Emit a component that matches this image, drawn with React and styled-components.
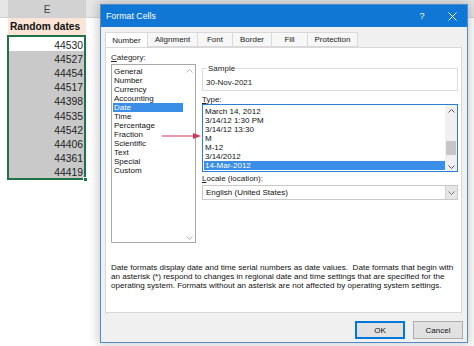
import React from "react";
import styled, { createGlobalStyle } from "styled-components";

const Global = createGlobalStyle`
  html, body { margin: 0; padding: 0; background: #fff; }
  * { box-sizing: border-box; }
`;

const UI = `"Liberation Sans", Arial, sans-serif`;
const XL = `"Liberation Sans", Arial, sans-serif`;

const Page = styled.div`
  position: relative;
  width: 474px;
  height: 346px;
  overflow: hidden;
  background: #fff;
  font-family: ${UI};
`;

/* ---------- spreadsheet ---------- */
const HeaderRow = styled.div`
  display: flex;
  height: 18px;
  background: #e6e6e6;
  border-bottom: 1px solid #d0d0d0;
`;
const Corner = styled.div`
  width: 8px;
`;
const ColHead = styled.div`
  width: 78px;
  background: #d2d2d2;
  display: flex;
  align-items: flex-end;
  justify-content: center;
  padding-bottom: 2px;
  font-family: ${XL};
  font-size: 10px;
  color: #444;
`;
const Column = styled.div`
  margin-left: 7px;
  width: 79px;
  display: flex;
  flex-direction: column;
`;
const TitleCell = styled.div`
  margin-left: 1px;
  height: 17px;
  background: #fce4d6;
  font-family: ${XL};
  font-weight: bold;
  font-size: 10.2px;
  line-height: 18px;
  padding-left: 2px;
  color: #111;
`;
const Selection = styled.div`
  position: relative;
  height: 145px;
  border: 2px solid #217346;
  display: flex;
  flex-direction: column;
`;
const DataCell = styled.div`
  height: 14.1px;
  background: ${(p) => (p.$active ? "#fff" : "#c9c9c9")};
  font-family: ${XL};
  font-size: 10.3px;
  line-height: 11px;
  color: #222;
  display: flex;
  align-items: flex-end;
  justify-content: flex-end;
  padding-right: 1px;
  padding-bottom: 0px;
`;
const FillHandle = styled.div`
  position: absolute;
  right: -4px;
  bottom: -4px;
  width: 5px;
  height: 5px;
  background: #217346;
  border: 1px solid #fff;
`;

/* ---------- dialog ---------- */
const Dialog = styled.div`
  position: absolute;
  left: 100px;
  top: 4px;
  width: 368px;
  height: 339px;
  border: 1px solid #4f8ccc;
  background: #f0f0f0;
  box-shadow: 0 0 10px 2px rgba(0, 0, 0, 0.2);
  display: flex;
  flex-direction: column;
`;
const TitleBar = styled.div`
  height: 22px;
  background: #1078d4;
  color: #fff;
  display: flex;
  align-items: center;
  padding-left: 5px;
  font-size: 8.8px;
`;
const TitleText = styled.div`
  flex: 1;
`;
const TitleBtn = styled.div`
  width: 30px;
  height: 22px;
  display: flex;
  align-items: center;
  justify-content: center;
  font-size: 9px;
`;
const Body = styled.div`
  flex: 1;
  display: flex;
  flex-direction: column;
  padding: 5px 5px 0 4px;
`;
const TabRow = styled.div`
  display: flex;
  height: 15px;
`;
const Tab = styled.div`
  width: ${(p) => p.$w}px;
  height: 15px;
  margin-right: -1px;
  margin-bottom: -1px;
  border: 1px solid #d9d9d9;
  border-bottom: ${(p) => (p.$on ? "none" : "1px solid #d9d9d9")};
  background: ${(p) => (p.$on ? "#fff" : "#f7f7f7")};
  position: relative;
  z-index: ${(p) => (p.$on ? 2 : 1)};
  font-size: 8px;
  color: #222;
  display: flex;
  align-items: center;
  justify-content: center;
`;
const Panel = styled.div`
  position: relative;
  height: 266px;
  background: #fff;
  border: 1px solid #d9d9d9;
  padding: 5px 3px 0 5px;
`;
const Grid = styled.div`
  display: grid;
  grid-template-columns: 85px 256px;
  column-gap: 6px;
`;
const Col = styled.div`
  display: flex;
  flex-direction: column;
  padding-top: ${(p) => p.$top || 0}px;
`;
const Label = styled.div`
  font-size: 8px;
  line-height: 9px;
  height: ${(p) => p.$h || 9}px;
  margin-top: ${(p) => p.$mt || 0}px;
  color: #222;
  u { text-decoration: underline; }
`;
const ListBox = styled.div`
  position: relative;
  height: ${(p) => p.$h}px;
  border: 1px solid ${(p) => (p.$focus ? "#2a7fd4" : "#a9a9a9")};
  background: #fff;
  display: flex;
`;
const Items = styled.div`
  flex: 1;
  padding-top: ${(p) => p.$pt || 1}px;
  padding-left: 1px;
`;
const Item = styled.div`
  height: 9px;
  line-height: 9px;
  font-size: 8px;
  padding-left: 1px;
  white-space: nowrap;
  color: ${(p) => (p.$sel ? "#fff" : "#111")};
  background: ${(p) => (p.$sel ? "#3b8ee8" : "transparent")};
`;
const ScrollBar = styled.div`
  width: 12px;
  background: ${(p) => (p.$track ? "#f0f0f0" : "#fff")};
  display: flex;
  flex-direction: column;
  align-items: center;
  justify-content: space-between;
  padding: 4px 0 2px;
`;
const Thumb = styled.div`
  width: 10px;
  height: 14px;
  background: #c6c6c6;
  margin-top: auto;
  margin-bottom: 10px;
`;
const Group = styled.fieldset`
  margin: 0;
  border: 1px solid #dcdcdc;
  padding: 1px 3px 3px 3px;
  min-width: 0;
  legend {
    padding: 0 1px;
    margin-left: 1px;
    font-size: 8px;
    line-height: 9px;
    color: #222;
  }
`;
const GroupValue = styled.div`
  font-size: 8px;
  line-height: 9px;
  margin-top: 4px;
  color: #222;
`;
const Combo = styled.div`
  height: 15px;
  margin-top: 2px;
  border: 1px solid #c9c9c9;
  background: #fff;
  display: flex;
  align-items: center;
  font-size: 8px;
  color: #111;
`;
const ComboText = styled.div`
  flex: 1;
  padding-left: 3px;
`;
const ComboBtn = styled.div`
  width: 12px;
  height: 13px;
  background: #e5e5e5;
  border-left: 1px solid #d4d4d4;
  display: flex;
  align-items: center;
  justify-content: center;
`;
const Desc = styled.div`
  margin-top: 20px;
  font-size: 8.1px;
  line-height: 9px;
  color: #111;
  white-space: nowrap;
`;
const Arrow = styled.svg`
  position: absolute;
  left: 56px;
  top: 84px;
`;
const ButtonRow = styled.div`
  display: flex;
  justify-content: flex-end;
  gap: 8px;
  margin-top: 8px;
  margin-right: -1px;
`;
const Button = styled.div`
  width: 50px;
  height: 18px;
  background: #e1e1e1;
  border: 1px solid ${(p) => (p.$primary ? "#0078d7" : "#adadad")};
  box-shadow: ${(p) => (p.$primary ? "inset 0 0 0 1px #0078d7" : "none")};
  font-size: 8px;
  color: #111;
  display: flex;
  align-items: center;
  justify-content: center;
`;

const Chevron = ({ up, color = "#9a9a9a" }) => (
  <svg width="7" height="4" viewBox="0 0 7 4">
    <polyline
      points={up ? "0.5,3.5 3.5,0.5 6.5,3.5" : "0.5,0.5 3.5,3.5 6.5,0.5"}
      fill="none"
      stroke={color}
      strokeWidth="1"
    />
  </svg>
);

const numbers = [44530, 44527, 44454, 44517, 44398, 44535, 44542, 44406, 44361, 44419];
const categories = [
  "General", "Number", "Currency", "Accounting", "Date", "Time",
  "Percentage", "Fraction", "Scientific", "Text", "Special", "Custom",
];
const types = [
  "March 14, 2012", "3/14/12 1:30 PM", "3/14/12 13:30", "M", "M-12", "3/14/2012", "14-Mar-2012",
];
const tabs = [
  ["Number", 43], ["Alignment", 51], ["Font", 36], ["Border", 40], ["Fill", 37], ["Protection", 51],
];

export default function App() {
  return (
    <Page>
      <Global />
      <HeaderRow>
        <Corner />
        <ColHead>E</ColHead>
      </HeaderRow>
      <Column>
        <TitleCell>Random dates</TitleCell>
        <Selection>
          {numbers.map((n, i) => (
            <DataCell key={n} $active={i === 0}>{n}</DataCell>
          ))}
          <FillHandle />
        </Selection>
      </Column>

      <Dialog>
        <TitleBar>
          <TitleText>Format Cells</TitleText>
          <TitleBtn>?</TitleBtn>
          <TitleBtn>
            <svg width="9" height="9" viewBox="0 0 9 9">
              <path d="M0.5 0.5 L8.5 8.5 M8.5 0.5 L0.5 8.5" stroke="#fff" strokeWidth="1" />
            </svg>
          </TitleBtn>
        </TitleBar>
        <Body>
          <TabRow>
            {tabs.map(([t, w], i) => (
              <Tab key={t} $w={w} $on={i === 0}>{t}</Tab>
            ))}
          </TabRow>
          <Panel>
            <Grid>
              <Col>
                <Label $h={11}><u>C</u>ategory:</Label>
                <ListBox $h={179}>
                  <Items $pt={1.5}>
                    {categories.map((c) => (
                      <Item key={c} $sel={c === "Date"}>{c}</Item>
                    ))}
                  </Items>
                  <ScrollBar>
                    <Chevron up color="#b5b5b5" />
                    <Chevron color="#b5b5b5" />
                  </ScrollBar>
                </ListBox>
              </Col>
              <Col $top={11}>
                <Group>
                  <legend>Sample</legend>
                  <GroupValue>30-Nov-2021</GroupValue>
                </Group>
                <Label $mt={4}><u>T</u>ype:</Label>
                <ListBox $h={68} $focus>
                  <Items $pt={2}>
                    {types.map((t, i) => (
                      <Item key={t} $sel={i === types.length - 1}>{t}</Item>
                    ))}
                  </Items>
                  <ScrollBar $track>
                    <Chevron up color="#555" />
                    <Thumb />
                    <Chevron color="#555" />
                  </ScrollBar>
                </ListBox>
                <Label $mt={2}><u>L</u>ocale (location):</Label>
                <Combo>
                  <ComboText>English (United States)</ComboText>
                  <ComboBtn>
                    <Chevron color="#777" />
                  </ComboBtn>
                </Combo>
              </Col>
            </Grid>
            <Desc>
              Date formats display date and time serial numbers as date values.&nbsp; Date formats that begin with
              <br />
              an asterisk (*) respond to changes in regional date and time settings that are specified for the
              <br />
              operating system. Formats without an asterisk are not affected by operating system settings.
            </Desc>
            <Arrow width="40" height="8" viewBox="0 0 40 8">
              <line x1="0" y1="4" x2="33" y2="4" stroke="#c8385b" strokeWidth="1.2" />
              <polygon points="31,1 39,4 31,7" fill="#c8385b" />
            </Arrow>
          </Panel>
          <ButtonRow>
            <Button $primary>OK</Button>
            <Button>Cancel</Button>
          </ButtonRow>
        </Body>
      </Dialog>
    </Page>
  );
}
